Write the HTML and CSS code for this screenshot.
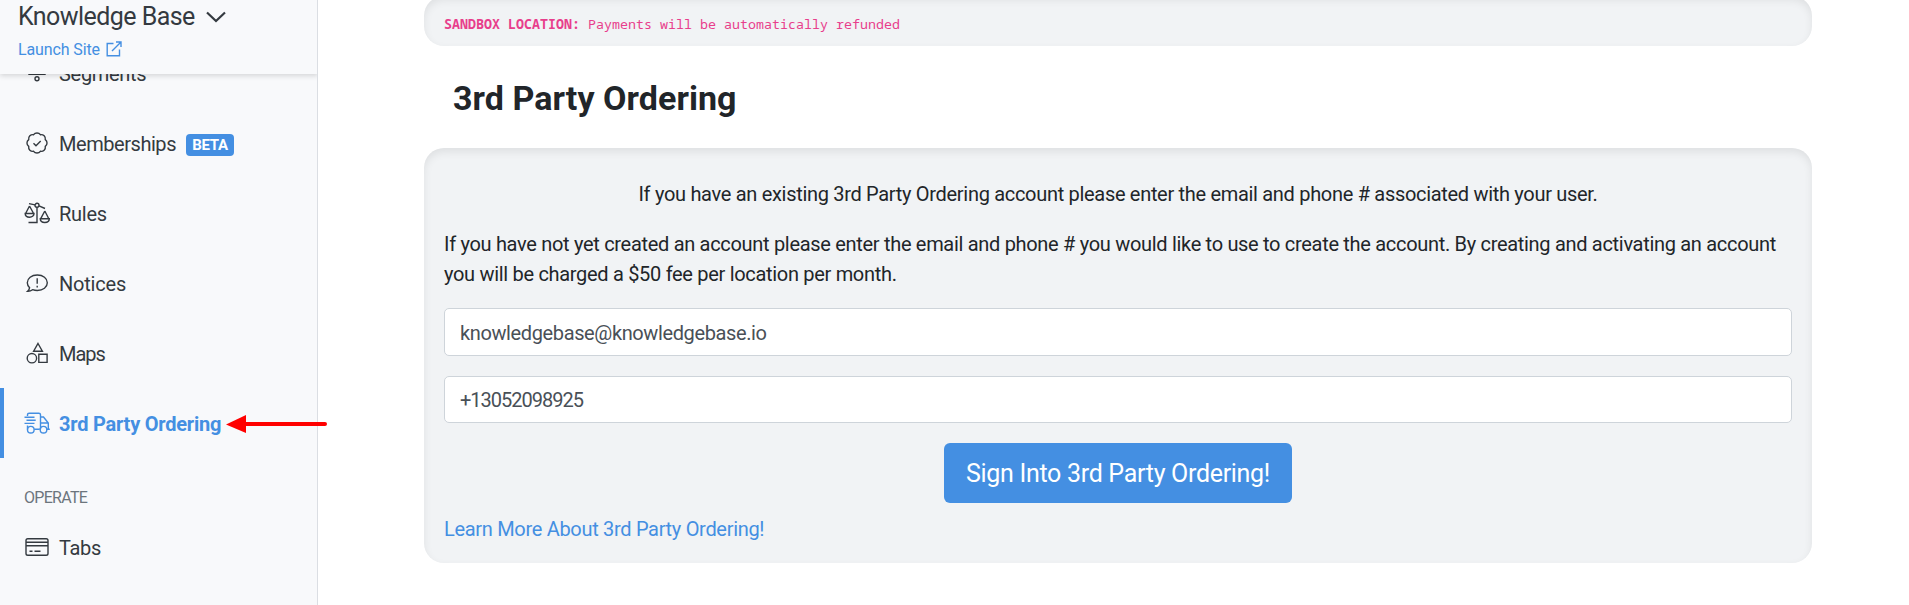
FILE: index.html
```
<!DOCTYPE html>
<html lang="en">
<head>
  <meta charset="UTF-8" />
  <title>3rd Party Ordering</title>
  <link rel="stylesheet" href="styles.css">
</head>
<body>

<aside class="sidebar">
  <header class="site-header">
    <div class="site-name">
      <span>Knowledge Base</span>
      <svg width="20" height="12" viewBox="0 0 20 12"><path d="M1 1.5l9 8.5 9-8.5" stroke-width="2.2"/></svg>
    </div>
    <a class="launch" href="#">
      <span>Launch Site</span>
      <svg width="16" height="16" viewBox="0 0 16 16"><path d="M7.5 2.5H1.2v12.3h12.3V8.5M10 1h5v5M15 1L6 10"/></svg>
    </a>
  </header>

  <nav class="nav">
    <a class="nav-item" href="#">
      <svg viewBox="0 0 26 22"><path d="M5 3h16v9.300H5z"/><circle cx="13" cy="16.700" r="2"/></svg>
      <span class="t-segments">Segments</span>
    </a>
    <a class="nav-item" href="#">
      <svg viewBox="0 0 26 22"><path d="M21.3 14.4a4.200 4.200 0 0 1-4.900 4.900 4.200 4.200 0 0 1-6.800 0 4.200 4.200 0 0 1-4.900-4.900 4.200 4.200 0 0 1 0-6.800 4.200 4.200 0 0 1 4.900-4.900 4.200 4.200 0 0 1 6.800 0 4.200 4.200 0 0 1 4.900 4.900 4.200 4.200 0 0 1 0 6.800zM9.500 11.200l2.500 2.500 4.700-4.700"/></svg>
      <span class="t-memberships">Memberships</span>
      <span class="badge">BETA</span>
    </a>
    <a class="nav-item" href="#">
      <svg viewBox="0 0 26 22"><circle cx="13" cy="3.3" r="2"/><path d="M5 1.6l6 1.3M15 3.9l6 2.6M13 5.3v15.2H4.5M5.5 4L1.6 11.5h8L5.5 4M1.2 11.5c0 5 8.8 5 8.8 0zM20.8 9l-4.2 7.8h8.2L20.8 9M16.3 16.8c0 5 9 5 9 0z"/></svg>
      <span class="t-rules">Rules</span>
    </a>
    <a class="nav-item" href="#">
      <svg viewBox="0 0 26 22"><path d="M13.3 3C7.500 3 3.300 6.300 3.300 10.700c0 2 .9 3.600 2.300 5-.2 1.600-1 2.800-2 3.600 1.900.1 3.700-.6 5-1.600 1.400.5 3 .8 4.700.8 5.800 0 10-3.400 10-7.800S19.100 3 13.300 3zM13.200 6.300v5.500M13.200 13.800v1.700"/></svg>
      <span class="t-notices">Notices</span>
    </a>
    <a class="nav-item" href="#">
      <svg viewBox="0 0 26 22"><path d="M14 1.500l4.400 7.700H9.600zM14.800 12.200h8.300v8.200h-8.300z"/><circle cx="7.900" cy="16.200" r="4.700"/></svg>
      <span class="t-maps">Maps</span>
    </a>
    <a class="nav-item active" href="#">
      <svg viewBox="0 0 26 22"><path d="M3.500 4V2.800c0-1 .7-1.600 1.600-1.600h9.700c1 0 1.700.6 1.700 1.600v14.500M.5 5.200h10M2.500 8.300h9.200M.5 11.400h10M3.500 13.500v4M16.500 5h3l4.800 6v6.300h1.500M16.500 11h7.800M10.200 17.300h5.500M22.800 17.300h3"/><circle cx="6.800" cy="17.700" r="3.300"/><circle cx="19.500" cy="17.700" r="3.300"/></svg>
      <span class="t-ordering">3rd Party Ordering</span>
    </a>
    <h6 class="nav-heading">OPERATE</h6>
    <a class="nav-item" href="#">
      <svg viewBox="0 0 26 22"><rect x="2" y="2.700" width="22" height="16.500" rx="1.800"/><path d="M2 6.200h22M2 9.700h22M5.500 15.200h3M10.500 15.200h6"/></svg>
      <span class="t-tabs">Tabs</span>
    </a>
  </nav>
</aside>

<main class="content">
  <div class="well sandbox">
    <code><b>SANDBOX LOCATION:</b> Payments will be automatically refunded</code>
  </div>

  <h1>3rd Party Ordering</h1>

  <div class="well panel">
    <p class="intro">If you have an existing 3rd Party Ordering account please enter the email and phone # associated with your user.</p>
    <p class="terms">If you have not yet created an account please enter the email and phone # you would like to use to create the account. By creating and activating an account<br>you will be charged a $50 fee per location per month.</p>
    <input class="email" type="text" value="knowledgebase@knowledgebase.io" />
    <input class="phone" type="text" value="+13052098925" />
    <button class="sign-in">Sign Into 3rd Party Ordering!</button>
    <a class="learn" href="#">Learn More About 3rd Party Ordering!</a>
  </div>
</main>

<!-- pointer to the active menu item -->
<svg class="arrow" width="101" height="18" viewBox="0 0 101 18"><path d="M0 9.500L20 0v18z"/><path d="M18 7h81a2 2 0 0 1 0 4H18z"/></svg>

</body>
</html>
```

FILE: styles.css
```
* { box-sizing: border-box; }
body { margin: 0; height: 605px; display: flex; overflow: hidden; position: relative; font-family: Roboto, "Liberation Sans", sans-serif; font-size: 20px; line-height: 30px; color: #212529; background: #fff; }
a { color: #448fe2; text-decoration: none; }
svg { fill: none; stroke: currentColor; stroke-width: 1.4; flex: none; }

.sidebar { width: 318px; height: 605px; flex: none; background: #f8f9fb; border-right: 1px solid #dbdee3; color: #343a40; overflow: hidden; }
.site-header { position: relative; z-index: 1; height: 74px; padding: 1px 0 0 18px; background: #f8f9fb; box-shadow: 0 2px 5px rgba(0, 0, 0, .14); margin-right: -1px; }
.site-name { display: flex; align-items: center; gap: 11px; font-size: 25px; height: 31px; letter-spacing: -.55px; }
.launch { display: flex; align-items: center; gap: 6px; font-size: 16px; height: 34px; letter-spacing: -.12px; }
.launch span { padding-top: 2px; }

.nav { margin-top: -36px; }
.nav-item { display: flex; align-items: center; height: 70px; padding-left: 20px; border-left: 4px solid transparent; color: #343a40; }
.nav-item svg { width: 26px; height: 22px; margin-right: 9px; }
.nav-item span { padding-top: 2px; }
.nav-item.active { border-left-color: #448fe2; color: #448fe2; font-weight: 700; }
.nav-heading { margin: 0; height: 54px; padding: 25px 0 0 24px; font-size: 16px; line-height: 30px; font-weight: 400; letter-spacing: -.7px; color: #6c757d; }
.nav-item .badge { margin: 3px 0 0 10px; padding: 0; width: 48px; height: 22px; border-radius: 4px; background: #448fe2; color: #fff; font-size: 15px; line-height: 23px; font-weight: 700; letter-spacing: -.3px; text-align: center; }
.t-segments { letter-spacing: -.3px; }
.t-memberships { letter-spacing: -.45px; }
.t-rules { letter-spacing: -.25px; }
.t-notices { letter-spacing: -.2px; }
.t-maps { letter-spacing: -1px; }
.t-ordering { letter-spacing: -.22px; }
.t-tabs { letter-spacing: -.3px; }

.content { width: 1388px; margin-left: 106px; }
.well { background: #f1f3f5; border-radius: 20px; box-shadow: inset 0 4px 8px rgba(0, 0, 0, .08); }
.sandbox { height: 50px; margin-top: -4px; padding: 13px 20px; }
code { display: block; font-family: "Noto Sans Mono", "DejaVu Sans Mono", monospace; font-size: 13.3px; line-height: 30px; letter-spacing: .02px; color: #e83e8c; }
h1 { margin: 0; height: 102px; padding: 31px 0 0 29px; font-size: 34px; line-height: 42px; font-weight: 700; letter-spacing: .06px; }
.panel { height: 415px; padding: 31px 20px 0; letter-spacing: -.308px; }
p { margin: 0 0 20px; white-space: nowrap; }
.intro { text-align: center; }
input { display: block; width: 100%; height: 48px; margin-bottom: 20px; padding: 0 15px; border: 1px solid #ced4da; border-radius: 5px; background: #fff; color: #495057; font: inherit; letter-spacing: -.38px; }
.terms { margin-bottom: 19px; }
.email { padding-top: 2px; }
.phone { height: 47px; letter-spacing: -1px; }
.sign-in { display: block; width: 348px; height: 60px; margin: 0 auto 11px; padding: 2px 0 0; border: 0; border-radius: 6px; background: #448fe2; color: #fff; font: inherit; font-size: 25px; letter-spacing: -.3px; }

.arrow { position: absolute; left: 226px; top: 415px; fill: #f00; stroke: none; }
```
